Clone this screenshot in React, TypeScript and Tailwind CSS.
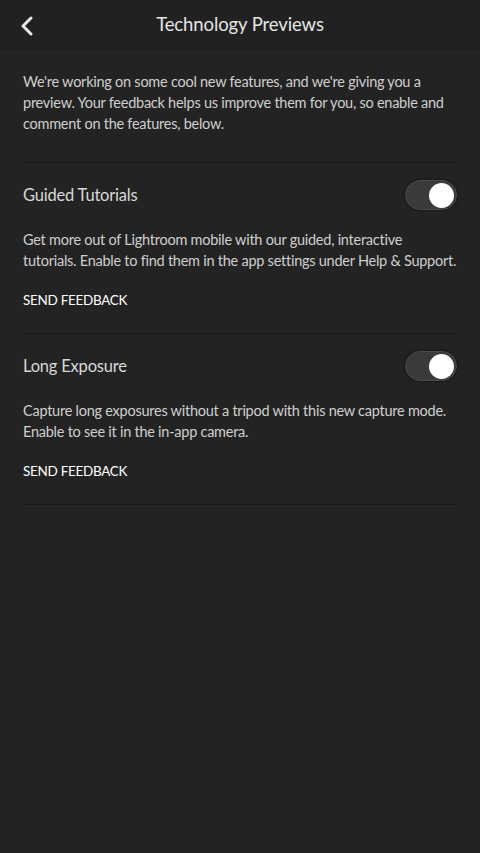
const font = { fontFamily: 'Lato, "Noto Sans", sans-serif' };

function Toggle() {
  return (
    <div className="flex h-[30px] w-[52px] items-center justify-end rounded-full border border-[#4a4a4a] bg-[#3a3a3a] pr-[2px] shadow-[0_0_3px_rgba(0,0,0,0.6)]">
      <div className="h-[25px] w-[25px] rounded-full bg-white" />
    </div>
  );
}

function Feature({ title, children }: { title: string; children: React.ReactNode }) {
  return (
    <div className="border-b border-[#1a1a1a] pb-[22px]">
      <div className="flex h-[62px] items-center justify-between pt-[2px]">
        <h4 className="text-[16.5px] tracking-[-0.2px] text-[#d8d8d8]">{title}</h4>
        <Toggle />
      </div>
      <p className="pt-[4px] text-[14.5px] leading-[21px] tracking-[-0.25px] text-[#cfcfcf]">{children}</p>
      <button className="pt-[19px] text-[13.5px] tracking-[-0.3px] text-white">SEND FEEDBACK</button>
    </div>
  );
}

export default function App() {
  return (
    <div className="min-h-[853px] w-[480px] bg-[#232323]" style={font}>
      <header className="relative flex h-[50px] items-center justify-center border-b border-[#1a1a1a] bg-[#212121]">
        <svg className="absolute left-[19px] top-[16px]" width="16" height="20" viewBox="0 0 16 20">
          <path d="M12 2 L4 10 L12 18" fill="none" stroke="#e8e8e8" strokeWidth="3" strokeLinecap="round" strokeLinejoin="round" />
        </svg>
        <h1 className="text-[18.5px] tracking-[-0.1px] text-[#e4e4e4]">Technology Previews</h1>
      </header>
      <main className="px-[23px]">
        <p className="border-b border-[#1a1a1a] pb-[28px] pt-[21px] text-[14.5px] leading-[21px] tracking-[-0.25px] text-[#cfcfcf]">
          We're working on some cool new features, and we're giving you a preview. Your feedback helps us improve them for you, so enable and comment on the features, below.
        </p>
        <Feature title="Guided Tutorials">
          Get more out of Lightroom mobile with our guided, interactive tutorials. Enable to find them in the app settings under Help &amp; Support.
        </Feature>
        <Feature title="Long Exposure">
          Capture long exposures without a tripod with this new capture mode. Enable to see it in the in-app camera.
        </Feature>
      </main>
    </div>
  );
}
